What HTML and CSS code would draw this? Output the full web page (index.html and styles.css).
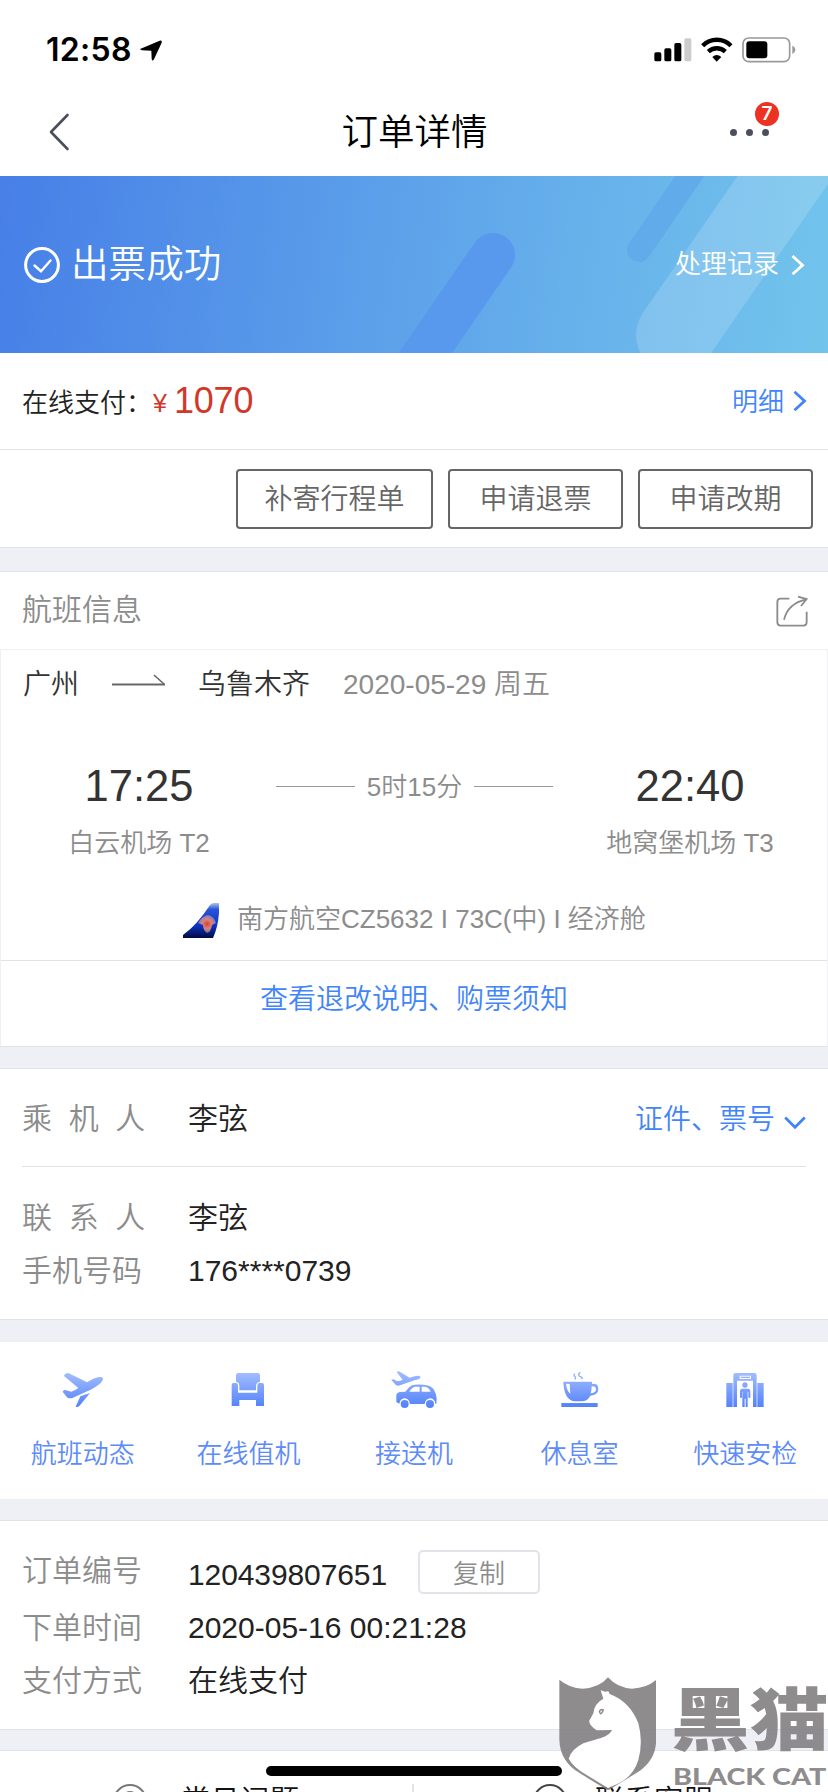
FILE: index.html
```html
<!DOCTYPE html>
<html lang="zh-CN">
<head>
<meta charset="utf-8">
<title>订单详情</title>
<link rel="stylesheet" href="styles.css">
</head>
<body>
<div class="screen">
  <div class="status">
    <span class="clock">12:58</span>
    <svg class="loc" width="22" height="21" viewBox="416 118 66 63"><path d="M418 144 L475 120 Q483 118 481 126 L458 176 Q453 184 451 175 L450 150 L422 149 Q414 147 418 144Z" fill="#000"/></svg>
    <svg class="signals" width="142" height="26" viewBox="716 110 426 78">
      <rect x="717" y="156" width="21" height="27" rx="5"/><rect x="747" y="144" width="21" height="39" rx="5"/><rect x="777" y="128" width="21" height="55" rx="5"/><rect x="807" y="114" width="21" height="69" rx="5" fill="#ccc"/>
      <g fill="none" stroke="#000" stroke-width="13"><path d="M862 136 A60 60 0 0 1 947 136"/><path d="M879 154 A37 37 0 0 1 930 154"/></g>
      <path d="M891 170 Q904 158 918 170 L904 184Z"/>
      <rect x="983" y="113" width="140" height="71" rx="17" fill="none" stroke="#999" stroke-width="5"/>
      <rect x="993" y="123" width="63" height="51" rx="9"/>
      <path d="M1131 136 Q1140 140 1140 149 Q1140 157 1131 161Z" fill="#999"/>
    </svg>
  </div>
  <div class="nav">
    <svg class="back" width="22" height="38" viewBox="0 0 22 38"><path d="M18.5 2 L2 19 L18.5 36" fill="none" stroke="#4b4e5c" stroke-width="2.6" stroke-linecap="round" stroke-linejoin="round"/></svg>
    <h1>订单详情</h1>
    <div class="more"><i></i><i></i><i></i><b>7</b></div>
  </div>
  <div class="hero">
    <svg class="hero-art" width="828" height="177" viewBox="0 0 828 177">
      <path d="M493 79 L379 244" stroke="#5899ed" stroke-width="44" stroke-linecap="round"/>
      <path d="M639 74 L724 -50" stroke="#62abeb" stroke-width="24" stroke-linecap="round"/>
      <path d="M675.6 159 L827 -60" stroke="#fff" stroke-opacity=".16" stroke-width="79" stroke-linecap="round"/>
    </svg>
    <svg class="ok" width="36" height="36" viewBox="0 0 36 36" fill="none" stroke="#fff"><circle cx="18" cy="18" r="16.4" stroke-width="3"/><path d="M10.5 18.5 L17 24.2 L26.5 13.5" stroke-width="2.4" stroke-linecap="round"/></svg>
    <span class="hero-title">出票成功</span>
    <span class="hero-link">处理记录</span>
    <svg class="chev" width="14" height="20" viewBox="0 0 14 20"><path d="M1.5 1 L11.5 10.2 L1.5 19.2" fill="none" stroke="#fff" stroke-width="2.8"/></svg>
  </div>
  <div class="pay">
    <span class="pay-label">在线支付：</span><span class="yen">¥</span><span class="amount">1070</span>
    <span class="detail">明细</span>
    <svg class="chev" width="14" height="20" viewBox="0 0 14 20"><path d="M1.5 .8 L11.5 10 L1.5 19.2" fill="none" stroke="#4285f8" stroke-width="2.8"/></svg>
  </div>
  <div class="actions">
    <span class="btn wide">补寄行程单</span><span class="btn">申请退票</span><span class="btn">申请改期</span>
  </div>
  <div class="gap gap-a"></div>
  <div class="sec-head">
    <span>航班信息</span>
    <svg width="32" height="32" viewBox="1082 703 96 96" fill="none" stroke="#8c8c8c" stroke-width="5.5"><path d="M1122 714 H1096 Q1086 714 1086 724 V785 Q1086 795 1096 795 H1164 Q1174 795 1174 785 V753"/><path d="M1106 777 Q1118 728 1173 716"/><path d="M1148 708 L1174 715 L1157 736"/></svg>
  </div>
  <div class="flight">
    <div class="route">
      <span class="from">广州</span>
      <svg width="53" height="13" viewBox="0 0 53 13" fill="none" stroke="#666"><path d="M0 10.5 H53" stroke-width="2"/><path d="M42 1 L52 10" stroke-width="1.6"/></svg>
      <span class="to">乌鲁木齐</span>
      <span class="date">2020-05-29 周五</span>
    </div>
    <div class="times">
      <div class="stop"><strong>17:25</strong><span>白云机场 T2</span></div>
      <div class="dur"><i></i><span>5时15分</span><i></i></div>
      <div class="stop"><strong>22:40</strong><span>地窝堡机场 T3</span></div>
    </div>
    <div class="airline">
      <svg width="36" height="35" viewBox="0 0 36 35"><defs><linearGradient id="tail" x1="0" y1="0" x2="0" y2="1"><stop offset="0" stop-color="#a9c2f2"/><stop offset=".18" stop-color="#2a55d8"/><stop offset=".65" stop-color="#0c33c4"/><stop offset="1" stop-color="#020b3c"/></linearGradient><radialGradient id="flower"><stop offset="0" stop-color="#d8402f"/><stop offset=".5" stop-color="#dc8178"/><stop offset="1" stop-color="#e2a9a8" stop-opacity=".5"/></radialGradient></defs><path d="M0 35 V32 Q14 22 27 2 L30 0 H36 V10 Q35 24 30 35Z" fill="url(#tail)"/><path d="M15 20 Q19 13 25 12 Q31 13 33 20 L29 22 Q28 29 24 30 Q20 27 20 22Z" fill="url(#flower)"/></svg>
      <span>南方航空CZ5632 I 73C(中) I 经济舱</span>
    </div>
    <div class="rules">查看退改说明、购票须知</div>
  </div>
  <div class="gap gap-b"></div>
  <div class="passenger">
    <span class="label">乘&nbsp;&nbsp;机&nbsp;&nbsp;人</span><span class="value">李弦</span>
    <span class="more-link">证件、票号</span>
    <svg width="22" height="14" viewBox="0 0 22 14"><path d="M1.2 1.6 L11 11.2 L20.8 1.6" fill="none" stroke="#4285f8" stroke-width="2.8"/></svg>
  </div>
  <div class="contact">
    <div class="line"><span class="label">联&nbsp;&nbsp;系&nbsp;&nbsp;人</span><span class="value">李弦</span></div>
    <div class="line"><span class="label">手机号码</span><span class="value">176****0739</span></div>
  </div>
  <div class="gap gap-c"></div>
  <svg width="0" height="0" class="defs"><defs><linearGradient id="blue" gradientUnits="userSpaceOnUse" x1="0" y1="98" x2="0" y2="198"><stop offset="0" stop-color="#a3bdfd"/><stop offset="1" stop-color="#5584fa"/></linearGradient><linearGradient id="blue2" gradientUnits="userSpaceOnUse" x1="0" y1="22" x2="0" y2="126"><stop offset="0" stop-color="#a3bdfd"/><stop offset="1" stop-color="#5584fa"/></linearGradient></defs></svg>
  <div class="services">
    <div class="svc"><svg width="42" height="40" viewBox="186 90 126 120" fill="url(#blue)"><path d="M192 108 Q194 99 205 99 L261 127 Q285 111 304 111 Q311 113 308 121 Q300 135 272 149 Q240 163 219 173 Q207 177 201 172 L188 155 Q190 149 196 150 L214 155 Q222 153 235 144Z"/><path d="M270 159 L240 196 Q235 203 227 200 L241 169Z"/></svg><span>航班动态</span></div>
    <div class="svc"><svg width="42" height="40" viewBox="682 90 126 120" fill="url(#blue)"><path d="M709 106 Q709 99 716 99 H774 Q781 99 781 106 V125 Q770 127 769 137 V151 H719 V137 Q719 127 709 125Z"/><path d="M696 135 Q696 129 702 129 H709 Q715 129 715 137 V158 H773 V137 Q773 129 779 129 H787 Q793 129 793 135 V198 H769 V180 H719 V198 H696Z"/></svg><span>在线值机</span></div>
    <div class="svc"><svg width="60" height="50" viewBox="0 0 180 150" class="car" fill="url(#blue2)"><path d="M38 24 Q42 19 50 25 L77 41 Q92 35 104 35 Q112 37 109 42 Q103 48 91 49 L44 65 Q37 66 32 59 L22 48 Q27 44 33 48 L41 52 L56 48Z"/><path fill-rule="evenodd" d="M37 93 Q38 86 48 84 L64 83 Q74 68 84 64 Q92 61 117 62 Q140 63 149 76 Q157 89 158 104 L157 119 H154 Q153 105 139 103 Q125 104 122 120 H78 Q75 104 62 103 Q49 104 46 119 L37 114Z M76 83 H107 V68 H93 Q84 70 76 83Z M113 68 V83 H140 Q134 68 121 68Z"/><circle cx="62" cy="120" r="12"/><circle cx="138" cy="120" r="12"/></svg><span>接送机</span></div>
    <div class="svc"><svg width="42" height="40" viewBox="436 90 126 120" fill="url(#blue)"><path d="M449 125 H535 V132 Q554 129 554 148 Q553 166 530 167 Q522 184 503 184 H484 Q451 181 449 125Z M534 139 Q534 151 531 160 Q547 159 547 148 Q547 138 534 139Z M457 131 Q459 152 470 161 L468 132Z" fill-rule="evenodd"/><rect x="443" y="189" width="109" height="12"/><path d="M484 101 Q478 106 484 110 Q488 113 483 118 M500 97 Q491 103 498 109 Q510 113 503 117" fill="none" stroke="#8fb0fc" stroke-width="4"/></svg><span>休息室</span></div>
    <div class="svc"><svg width="42" height="40" viewBox="929 90 126 120" fill="url(#blue)"><path fill-rule="evenodd" d="M957 201 V106 Q957 99 964 99 H1020 Q1027 99 1027 106 V201 H1016 V122 H968 V201Z M976 107 V117 H1010 V107Z"/><rect x="979" y="110" width="28" height="4"/><rect x="936" y="129" width="19" height="72"/><rect x="1029" y="129" width="19" height="72"/><circle cx="992" cy="135" r="8"/><path d="M983 146 H1002 Q1008 147 1008 153 V173 H1002 V156 H1000 V201 H994 V176 H991 V201 H984 V156 H983 V173 H977 V153 Q977 147 983 146Z"/></svg><span>快速安检</span></div>
  </div>
  <div class="gap gap-d"></div>
  <div class="order">
    <div class="line first"><span class="label">订单编号</span><span class="value num">120439807651</span><span class="copy">复制</span></div>
    <div class="line second"><span class="label">下单时间</span><span class="value">2020-05-16 00:21:28</span></div>
    <div class="line"><span class="label">支付方式</span><span class="value">在线支付</span></div>
  </div>
  <div class="gap gap-e"></div>
  <div class="help">
    <div class="help-item"><svg width="34" height="34" viewBox="0 0 34 34" fill="none" stroke="#777"><circle cx="17" cy="17" r="16" stroke-width="2"/><path d="M12 14 Q12 8 17 8 Q22 8 22 13 Q22 16 17 19 V22" stroke-width="2"/></svg><span>常见问题</span></div>
    <div class="help-item right"><svg width="34" height="34" viewBox="0 0 34 34" fill="none" stroke="#444"><circle cx="17" cy="17" r="16" stroke-width="2"/></svg><span>联系客服</span></div>
  </div>
  <div class="home-bar"></div>
  <svg class="mark" width="298" height="132" viewBox="0 0 894 396">
    <g fill="#807c7e" fill-opacity=".88">
      <path d="M88 59 Q118 84 158 86 Q208 84 234 52 Q262 84 306 86 Q350 84 378 60 V250 Q374 300 330 332 L240 388 Q236 392 228 388 L150 340 Q90 305 88 240Z"/>
      <text x="422" y="230" class="mark-cn" textLength="474" lengthAdjust="spacingAndGlyphs" transform="translate(0 53) scale(1 .88)">黑猫</text>
      <text x="429" y="374" class="mark-en" textLength="460" lengthAdjust="spacingAndGlyphs">BLACK CAT</text>
    </g>
    <path d="M212 91 L225 95 L235 94 L239 102 Q300 125 325 190 Q340 245 325 300 Q310 350 262 372 L234 384 L170 345 Q130 322 116 296 Q124 268 160 250 L215 233 Q240 225 246 210 L200 211 Q190 205 182 195 Q174 183 181 176 L190 160 Q193 130 220 116Z" fill="#fff"/>
    <path d="M206 153 Q213 143 222 148 Q222 158 212 164 Q206 160 206 153Z M211 153 L212 160 L218 151Z" fill="#8f8c8e" fill-rule="evenodd"/>
  </svg>
</div>
</body>
</html>
```
FILE: styles.css
```css
* { box-sizing: border-box; }
html, body { margin: 0; height: 1792px; overflow: hidden; }
body {
  font-family: "Liberation Sans", "Noto Sans CJK SC", sans-serif;
  font-weight: 350;
  color: #222;
  background: #fff;
}
svg { display: block; flex: none; }
span { white-space: nowrap; }
.screen { position: relative; width: 828px; height: 1792px; overflow: hidden; background: #fff; }

.status { height: 88px; display: flex; align-items: center; padding: 12px 32px 0 46px; }
.clock { font: 600 32px/36px Inter, sans-serif; color: #000; letter-spacing: .3px; }
.loc { margin-left: 8px; }
.signals { margin-left: auto; }

.nav { height: 88px; display: flex; align-items: center; justify-content: space-between; padding: 0 58px 0 49px; }
.nav h1 { margin: 2px 0 0 28px; font-size: 36.5px; line-height: 44px; font-weight: 350; color: #000; }
.more { position: relative; display: flex; gap: 9px; width: 40px; }
.more i { width: 7px; height: 7px; border-radius: 50%; background: #4b4e5c; }
.more b { position: absolute; left: 25px; top: -27px; width: 24px; height: 24px; border-radius: 50%; background: #ec3323; color: #fff; font: 600 19px/24px Inter, sans-serif; text-align: center; }

.hero { position: relative; height: 177px; display: flex; align-items: center; padding: 0 23px 0 24px; color: #fff; background: linear-gradient(98deg, #477fe7 0%, #5ea3ea 50%, #66b0eb 68%, #72c4ec 100%); }
.hero-art { position: absolute; left: 0; top: 0; fill: none; }
.ok, .hero-title, .hero-link, .hero .chev { position: relative; }
.hero-title { margin-left: 11px; font-size: 37.6px; line-height: 48px; margin-top: -1px; }
.hero-link { margin-left: auto; font-size: 26px; line-height: 36px; margin-top: -1px; }
.hero .chev { margin-left: 12px; }

.pay { height: 97px; display: flex; align-items: center; padding: 0 21px 0 22px; border-bottom: 1px solid #e2e2e6; }
.pay-label { font-size: 26px; line-height: 36px; margin-top: 3px; }
.yen { font-size: 25px; line-height: 36px; color: #d0382a; margin: 4px 0 0 1px; }
.amount { font-size: 36px; line-height: 40px; color: #d0382a; margin: -1px 0 0 7px; letter-spacing: -.2px; }
.detail { margin-left: auto; font-size: 26px; line-height: 36px; color: #4285f8; margin-top: 1px; }
.pay .chev { margin-left: 9px; }

.actions { height: 97px; display: flex; justify-content: flex-end; gap: 15px; padding: 19px 15px 0 0; }
.btn { width: 175px; height: 60px; border: 2px solid #666; border-radius: 4px; text-align: center; font-size: 28px; line-height: 58px; color: #666; }
.btn.wide { width: 197px; }

.gap { background: #eff0f5; border-top: 1px solid #e2e3e8; border-bottom: 1px solid #e2e3e8; }
.gap-a { height: 25px; }
.gap-b { height: 23px; }
.gap-c { height: 23px; border-bottom: 0; }
.gap-d { height: 22px; border-top: 0; }
.gap-e { height: 22px; }

.sec-head { height: 77px; display: flex; align-items: center; justify-content: space-between; padding: 0 20px 0 22px; font-size: 30px; line-height: 40px; color: #8c8c8c; }
.sec-head span { margin-top: -2px; }

.flight { height: 397px; border: 1px solid #f0f0f2; border-bottom: 0; }
.route { display: flex; align-items: center; height: 68px; padding: 2px 0 0 22px; font-size: 28px; line-height: 40px; color: #333; }
.route svg { margin: -10px 33px 0 33px; }
.route .date { margin-left: 33px; color: #8c8c8c; }
.times { display: grid; grid-template-columns: 276px 276px 1fr; height: 156px; padding-top: 43px; }
.stop { display: flex; flex-direction: column; align-items: center; }
.stop strong { font-size: 43.5px; line-height: 50px; font-weight: 400; color: #333; }
.stop span { font-size: 26px; line-height: 36px; color: #8c8c8c; margin-top: 14px; }
.dur { display: flex; align-items: center; justify-content: space-between; height: 50px; font-size: 26px; color: #8c8c8c; margin-left: -1px; }
.dur i { width: 79px; height: 1px; background: #999; }
.dur span { line-height: 36px; margin-top: 2px; }
.airline { height: 87px; display: flex; align-items: center; padding: 6px 0 0 182px; font-size: 26px; line-height: 36px; color: #8c8c8c; border-bottom: 1px solid #e2e3e8; }
.airline span { margin: -2px 0 0 18px; }
.rules { text-align: center; font-size: 28px; line-height: 40px; padding-top: 19px; color: #4285f8; }

.label { width: 166px; font-size: 30px; line-height: 40px; color: #8c8c8c; flex: none; }
.value { font-size: 30px; line-height: 40px; color: #222; }
.passenger { height: 98px; margin: 0 22px; padding-top: 2px; display: flex; align-items: center; border-bottom: 1px solid #e2e3e8; }
.more-link { margin: 3px 0 0 auto; font-size: 28px; line-height: 40px; color: #4285f8; }
.passenger svg { margin: 8px 0 0 9px; }
.contact { height: 152px; padding: 31px 22px 0; display: flex; flex-direction: column; gap: 13px; }
.line { display: flex; align-items: center; }

.services { height: 157px; display: grid; grid-template-columns: repeat(5, 1fr); padding-top: 28px; }
.svc { display: flex; flex-direction: column; align-items: center; gap: 26px; font-size: 26px; line-height: 36px; color: #5d8bf8; }
.svc .car { margin: -6px 0 -4px; }
.defs { position: absolute; }

.order { height: 208px; padding: 28px 22px 0; }
.first { height: 46px; }
.first .label { margin-top: -2px; }
.first .num { margin-top: 6px; letter-spacing: -.1px; }
.second { margin: 13px 0; }
.copy { width: 122px; height: 44px; margin-left: 31px; border: 2px solid #e2e2e8; border-radius: 5px; text-align: center; font-size: 26px; line-height: 44px; color: #8c8c8c; }

.help { height: 96px; display: grid; grid-template-columns: 1fr 1fr; padding-top: 33px; }
.help-item { display: flex; justify-content: center; align-items: flex-start; gap: 34px; font-size: 29.5px; line-height: 34px; border-right: 2px solid #e2e3e8; color: #111; }
.help-item.right { border: 0; padding: 0 0 0 4px; gap: 28px; }
.home-bar { position: absolute; left: 266px; top: 1766px; width: 296px; height: 10px; border-radius: 5px; background: #000; }
.mark { position: absolute; left: 530px; top: 1660px; }
.mark-cn { font: 900 232px "Noto Sans CJK SC", sans-serif; }
.mark-en { font: 900 68px Lato, "Liberation Sans", sans-serif; }
```
